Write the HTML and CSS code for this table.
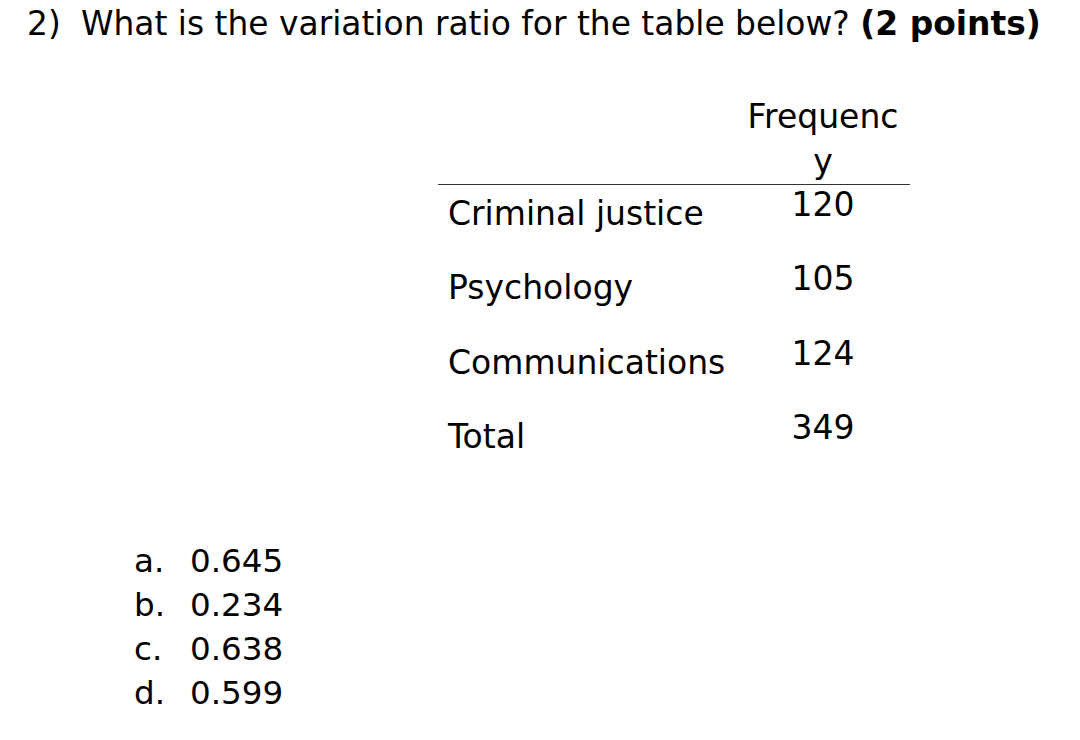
FILE: index.html
```html
<!DOCTYPE html>
<html>
<head>
<meta charset="utf-8">
<link rel="stylesheet" href="styles.css">
</head>
<body>
<div class="question">
  <span class="qnum">2)</span>
  <span class="qtext">What is the variation ratio for the table below? <b>(2 points)</b></span>
</div>
<table class="freq">
  <thead>
    <tr><th class="blank"></th><th class="head">Frequency</th></tr>
  </thead>
  <tbody>
    <tr><td class="label">Criminal justice</td><td class="num">120</td></tr>
    <tr><td class="label">Psychology</td><td class="num">105</td></tr>
    <tr><td class="label">Communications</td><td class="num">124</td></tr>
    <tr><td class="label">Total</td><td class="num">349</td></tr>
  </tbody>
</table>
<ol class="answers">
  <li><span class="letter">a.</span><span>0.645</span></li>
  <li><span class="letter">b.</span><span>0.234</span></li>
  <li><span class="letter">c.</span><span>0.638</span></li>
  <li><span class="letter">d.</span><span>0.599</span></li>
</ol>
</body>
</html>
```

FILE: styles.css
```css
html, body {
  margin: 0;
  padding: 0;
  background: #fff;
  color: #000;
  font-family: "DejaVu Sans", sans-serif;
  font-size: 33px;
}
body {
  width: 1080px;
  height: 740px;
  overflow: hidden;
}
.question {
  display: flex;
  padding: 5px 0 0 27px;
  line-height: 38px;
  font-size: 32.9px;
  white-space: nowrap;
}
.qnum { width: 54px; }
.freq {
  border-collapse: collapse;
  margin: 51px 0 0 438px;
}
.freq th, .freq td { padding: 0; font-weight: normal; }
.freq thead th {
  border-bottom: 1.5px solid #333;
}
.blank { width: 298px; }
.head {
  width: 174px;
  max-width: 174px;
  box-sizing: border-box;
  padding: 0 6px !important;
  text-align: center;
  word-break: break-all;
  line-height: 45px;
}
.label {
  padding: 12px 0 0 10px !important;
  height: 62.3px;
  vertical-align: top;
  line-height: 34px;
  white-space: nowrap;
}
.num {
  text-align: center;
  vertical-align: top;
  padding-top: 3px !important;
  line-height: 34px;
}
.answers {
  list-style: none;
  margin: 57px 0 0 134px;
  padding: 0;
  font-size: 32.6px;
}
.answers li {
  display: flex;
  line-height: 44px;
}
.letter { width: 56px; }
```
